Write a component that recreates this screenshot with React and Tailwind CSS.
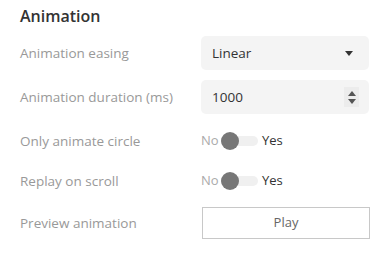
export default function App() {
  const font = { fontFamily: '"Open Sans", "Noto Sans", sans-serif' };
  return (
    <div className="w-[386px] h-[260px] bg-white pl-[20px] pt-[4px]" style={font}>
      <div className="text-[16px] leading-[24px] font-semibold text-[#333]">Animation</div>
      <div className="mt-[8px] flex items-center h-[34px]">
        <div className="w-[181px] text-[13.5px] text-[#999]">Animation easing</div>
        <div className="w-[168px] h-[34px] rounded-[5px] bg-[#f4f4f4] flex items-center justify-between pl-[11px] pr-[16px]">
          <span className="text-[13.5px] text-[#333]">Linear</span>
          <svg width="8" height="5" viewBox="0 0 8 5"><path d="M0 0 L8 0 L4 5 Z" fill="#333" /></svg>
        </div>
      </div>
      <div className="mt-[10px] flex items-center h-[34px]">
        <div className="w-[181px] text-[13.5px] text-[#999]">Animation duration (ms)</div>
        <div className="w-[168px] h-[34px] rounded-[5px] bg-[#f4f4f4] flex items-center justify-between pl-[11px] pr-[10px]">
          <span className="text-[13.5px] text-[#333]">1000</span>
          <div className="w-[15px] h-[20px] bg-[#ececec] flex flex-col items-center justify-center gap-[3px]">
            <svg width="8" height="5" viewBox="0 0 8 5"><path d="M0 5 L8 5 L4 0 Z" fill="#555" /></svg>
            <svg width="8" height="5" viewBox="0 0 8 5"><path d="M0 0 L8 0 L4 5 Z" fill="#555" /></svg>
          </div>
        </div>
      </div>
      {["Only animate circle", "Replay on scroll"].map((l, i) => (
        <div key={l} className={(i === 0 ? "mt-[17px]" : "mt-[20px]") + " flex items-center h-[20px]"}>
          <div className="w-[181px] text-[13.5px] text-[#999]">{l}</div>
          <div className="flex items-center">
            <span className="text-[13px] text-[#aaa] w-[20px]">No</span>
            <div className="relative w-[37px] h-[10px] rounded-full bg-[#f0f0f0]">
              <div className="absolute left-0 top-[-4px] w-[18px] h-[18px] rounded-full bg-[#777]" />
            </div>
            <span className="ml-[4px] text-[13px] text-[#333]">Yes</span>
          </div>
        </div>
      ))}
      <div className="mt-[16px] flex items-center h-[32px]">
        <div className="w-[182px] text-[13.5px] text-[#999]">Preview animation</div>
        <button className="w-[168px] h-[32px] border border-[#c8c8c8] bg-white text-[13px] text-[#666]">Play</button>
      </div>
    </div>
  );
}
